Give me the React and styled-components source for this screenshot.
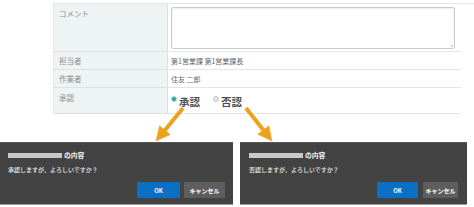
import React from 'react';
import styled, { createGlobalStyle } from 'styled-components';

const GlobalStyle = createGlobalStyle`
  html, body {
    margin: 0;
    padding: 0;
    background: #ffffff;
  }
  body {
    font-family: "Noto Sans CJK JP", "Noto Sans", sans-serif;
  }
`;

const rows = [
  { label: '担当者', value: '第1営業課 第1営業課長', height: 18 },
  { label: '作業者', value: '住友 二郎', height: 18 },
];

const dialogs = [
  { message: '承認しますが、よろしいですか？', left: 0, width: 233, pad: 8, right: 8, okWidth: 43, cancelWidth: 41, gap: 4 },
  { message: '否認しますが、よろしいですか？', left: 7, width: 227, pad: 9, right: 9, okWidth: 41, cancelWidth: 35, gap: 5 },
];

const arrows = [
  { from: [183, 108], base: [164.9, 130.2], head: '156,141 170.3,134.6 159.5,125.8' },
  { from: [246, 108], base: [263.3, 130], head: '272,141 268.8,125.7 257.8,134.3' },
];

const App = () => {
  return (
    <Canvas>
      <GlobalStyle />
      <FormTable>
        <LabelCell $height={48}>コメント</LabelCell>
        <ValueCell $height={48}>
          <CommentBox />
        </ValueCell>
        {rows.map((row) => (
          <React.Fragment key={row.label}>
            <LabelCell $height={row.height} $center>{row.label}</LabelCell>
            <ValueCell $height={row.height}>{row.value}</ValueCell>
          </React.Fragment>
        ))}
        <LabelCell $height={26}>承認</LabelCell>
        <ValueCell $height={26}>
          <RadioGroup>
            <RadioItem>
              <RadioDot $checked />
              承認
            </RadioItem>
            <RadioItem>
              <RadioDot />
              否認
            </RadioItem>
          </RadioGroup>
        </ValueCell>
      </FormTable>

      <DialogRow>
        {dialogs.map((d) => (
          <Dialog key={d.message} $offset={d.left} $width={d.width} $pad={d.pad} $right={d.right}>
            <DialogTitle>
              <MaskedName />
              の内容
            </DialogTitle>
            <DialogMessage>{d.message}</DialogMessage>
            <ButtonRow $gap={d.gap}>
              <DialogButton $primary $width={d.okWidth}>OK</DialogButton>
              <DialogButton $width={d.cancelWidth}>キャンセル</DialogButton>
            </ButtonRow>
          </Dialog>
        ))}
      </DialogRow>

      <ArrowLayer width="474" height="207" viewBox="0 0 474 207">
        {arrows.map((a) => (
          <g key={a.head} fill="#eda21c" stroke="#eda21c">
            <line x1={a.from[0]} y1={a.from[1]} x2={a.base[0]} y2={a.base[1]} strokeWidth="4" />
            <polygon points={a.head} strokeWidth="0.5" strokeLinejoin="round" />
          </g>
        ))}
      </ArrowLayer>
    </Canvas>
  );
};

const Canvas = styled.div`
  position: relative;
  width: 474px;
  height: 207px;
  overflow: hidden;
  background: #ffffff;
`;

const FormTable = styled.div`
  display: grid;
  grid-template-columns: 114px 293px;
  margin: 3px 0 0 53px;
  border-top: 1px solid #e4e8e8;
  border-left: 1px solid #e4e8e8;
`;

const LabelCell = styled.div`
  box-sizing: border-box;
  height: ${(p) => p.$height}px;
  padding: ${(p) => (p.$center ? '0 0 0 5px' : '5px 0 0 5px')};
  display: flex;
  align-items: ${(p) => (p.$center ? 'center' : 'flex-start')};
  background: #eef3f3;
  border-right: 1px solid #dde3e3;
  border-bottom: 1px solid #dde3e3;
  font-size: 7.5px;
  line-height: 10px;
  color: #8a8f90;
`;

const ValueCell = styled.div`
  box-sizing: border-box;
  height: ${(p) => p.$height}px;
  padding: 0 6px 0 3px;
  display: flex;
  align-items: center;
  border-bottom: 1px solid #e2e6e6;
  font-size: 7px;
  color: #666b6c;
`;

const CommentBox = styled.div`
  box-sizing: border-box;
  width: 285px;
  height: 42px;
  border: 1px solid #c9cccc;
  border-radius: 2px;
  box-shadow: inset 0 1px 2px rgba(0, 0, 0, 0.08);
  background:
    linear-gradient(135deg, transparent 70%, #b0b0b0 70%, #b0b0b0 74%, transparent 74%, transparent 82%, #b0b0b0 82%, #b0b0b0 86%, transparent 86%) no-repeat right 1px bottom 1px / 6px 6px,
    #ffffff;
`;

const RadioGroup = styled.div`
  display: flex;
  align-items: center;
  gap: 13px;
  margin-top: 2px;
`;

const RadioItem = styled.label`
  display: flex;
  align-items: center;
  gap: 2px;
  font-size: 10.5px;
  font-weight: 700;
  color: #4a4e4f;
`;

const RadioDot = styled.span`
  display: inline-block;
  box-sizing: border-box;
  width: 6px;
  height: 6px;
  border-radius: 50%;
  margin-top: -5px;
  background: ${(p) => (p.$checked ? '#2f9f9c' : '#e6e6e6')};
  border: 1px solid ${(p) => (p.$checked ? '#a9dcdb' : '#c4c4c4')};
`;

const DialogRow = styled.div`
  display: flex;
  margin-top: 28px;
`;

const Dialog = styled.div`
  box-sizing: border-box;
  width: ${(p) => p.$width}px;
  margin-left: ${(p) => p.$offset}px;
  padding: 8px ${(p) => p.$right}px 6px ${(p) => p.$pad}px;
  background: #434343;
  border-top: 1px solid #585858;
  box-shadow: 0 1px 0 #9a9a9a;
  display: flex;
  flex-direction: column;
`;

const DialogTitle = styled.div`
  display: flex;
  align-items: center;
  gap: 2px;
  height: 8px;
  font-size: 6.8px;
  font-weight: 700;
  color: #f2f2f2;
`;

const MaskedName = styled.span`
  display: inline-block;
  width: 54px;
  height: 5px;
  background: #c9c9c9;
`;

const DialogMessage = styled.div`
  margin-top: 6px;
  font-size: 6px;
  font-weight: 500;
  color: #ececec;
  line-height: 10px;
  white-space: nowrap;
`;

const ButtonRow = styled.div`
  display: flex;
  justify-content: flex-end;
  gap: ${(p) => p.$gap}px;
  margin-top: 7px;
`;

const DialogButton = styled.div`
  box-sizing: border-box;
  width: ${(p) => p.$width}px;
  height: 16px;
  display: flex;
  align-items: center;
  justify-content: center;
  white-space: nowrap;
  font-size: 6px;
  font-weight: 700;
  color: #ffffff;
  background: ${(p) => (p.$primary ? '#0b70c4' : '#5e5e5e')};
`;

const ArrowLayer = styled.svg`
  position: absolute;
  left: 0;
  top: 0;
  pointer-events: none;
`;

export default App;
